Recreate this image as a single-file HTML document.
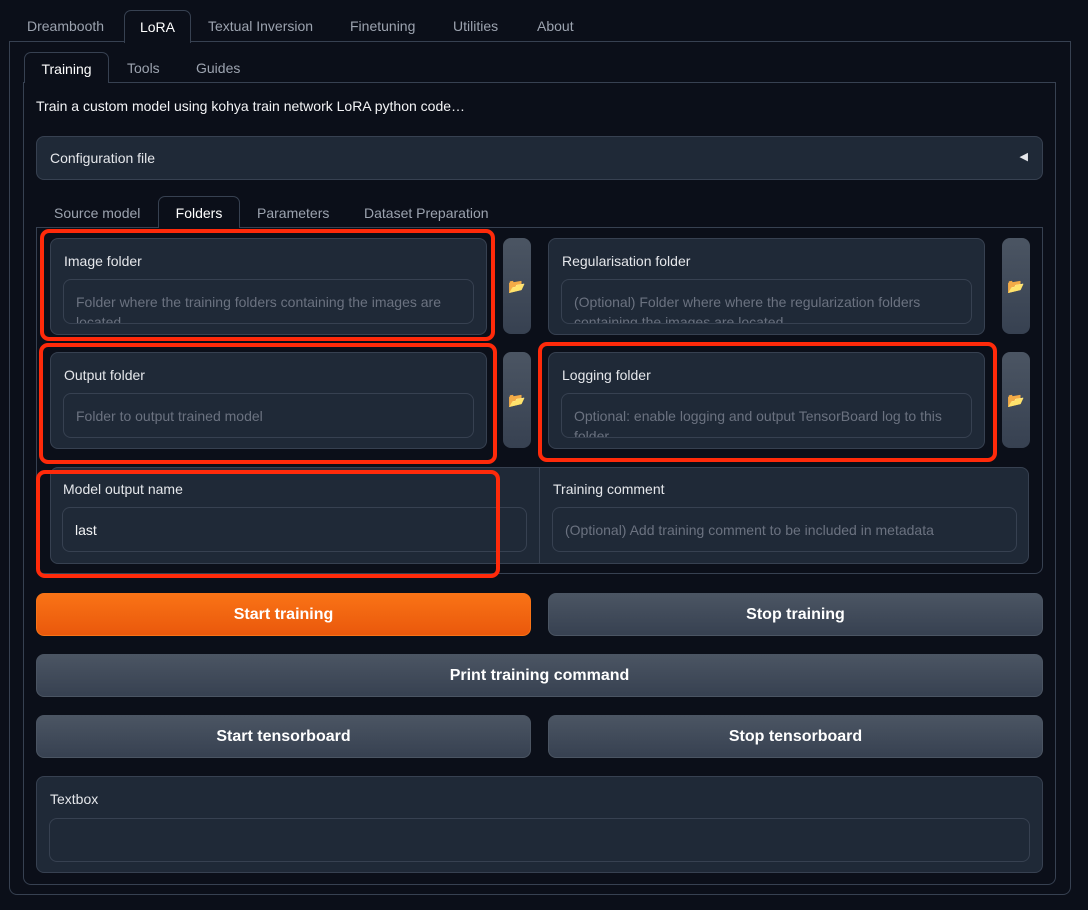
<!DOCTYPE html>
<html><head><style>
*{box-sizing:border-box;margin:0;padding:0}
body{width:1088px;height:910px;background:#0b0f19;font-family:"Liberation Sans",sans-serif;color:#e5e7eb;position:relative;overflow:hidden;font-size:14px}
.a{position:absolute}
.tab{position:absolute;font-size:14px;color:#9ca3af}
.sel{border:1px solid #374151;border-bottom:none;background:#0b0f19;border-radius:7px 7px 0 0;color:#fff}
.box{position:absolute;background:#1f2937;border:1px solid #374151;border-radius:8px}
.lbl{position:absolute;left:13px;top:14px;font-size:14px;color:#e5e7eb}
.inp{position:absolute;left:12px;right:12px;top:40px;height:45px;border:1px solid #374151;border-radius:8px;background:#1f2937;color:#6b7280;font-size:14px;padding:12px 12px 0;line-height:20px;overflow:hidden}
.fb{position:absolute;width:28px;height:96px;border-radius:8px;background:linear-gradient(#4b5563,#374151);display:flex;align-items:center;justify-content:center}
.red{position:absolute;border:4px solid #ff2a0a;border-radius:9px}
.btn{position:absolute;height:43px;border-radius:8px;background:linear-gradient(#4b5563,#374151);color:#fff;font-weight:bold;font-size:16px;display:flex;align-items:center;justify-content:center;border:1px solid #4b5563}
</style></head><body>
<div class="a" style="left:9px;top:41px;width:1062px;height:854px;border:1px solid #374151;border-radius:0 0 8px 8px"></div>
<div class="tab" style="left:27px;top:18px">Dreambooth</div>
<div class="tab sel" style="left:124px;top:10px;width:67px;height:33px;text-align:center;padding-top:8px">LoRA</div>
<div class="tab" style="left:208px;top:18px">Textual Inversion</div>
<div class="tab" style="left:350px;top:18px">Finetuning</div>
<div class="tab" style="left:453px;top:18px">Utilities</div>
<div class="tab" style="left:537px;top:18px">About</div>

<div class="a" style="left:23px;top:82px;width:1033px;height:803px;border:1px solid #374151;border-radius:0 0 8px 8px"></div>
<div class="tab sel" style="left:24px;top:52px;width:85px;height:31px;text-align:center;padding-top:8px">Training</div>
<div class="tab" style="left:127px;top:60px">Tools</div>
<div class="tab" style="left:196px;top:60px">Guides</div>
<div class="a" style="left:36px;top:98px;font-size:14px;color:#f3f4f6">Train a custom model using kohya train network LoRA python code…</div>

<div class="box" style="left:36px;top:136px;width:1007px;height:44px"><div class="a" style="left:13px;top:13px">Configuration file</div><div class="a" style="right:14px;top:13px;font-size:11px">◀</div></div>

<div class="a" style="left:36px;top:227px;width:1007px;height:347px;border:1px solid #374151;border-radius:0 0 8px 8px"></div>
<div class="tab" style="left:54px;top:205px">Source model</div>
<div class="tab sel" style="left:158px;top:196px;width:82px;height:32px;text-align:center;padding-top:8px">Folders</div>
<div class="tab" style="left:257px;top:205px">Parameters</div>
<div class="tab" style="left:364px;top:205px">Dataset Preparation</div>

<div class="box" style="left:50px;top:238px;width:437px;height:97px"><div class="lbl">Image folder</div><div class="inp">Folder where the training folders containing the images are located</div></div>
<div class="fb" style="left:503px;top:238px">📂</div>
<div class="box" style="left:548px;top:238px;width:437px;height:97px"><div class="lbl">Regularisation folder</div><div class="inp">(Optional) Folder where where the regularization folders containing the images are located</div></div>
<div class="fb" style="left:1002px;top:238px">📂</div>

<div class="box" style="left:50px;top:352px;width:437px;height:97px"><div class="lbl">Output folder</div><div class="inp">Folder to output trained model</div></div>
<div class="fb" style="left:503px;top:352px">📂</div>
<div class="box" style="left:548px;top:352px;width:437px;height:97px"><div class="lbl">Logging folder</div><div class="inp">Optional: enable logging and output TensorBoard log to this folder</div></div>
<div class="fb" style="left:1002px;top:352px">📂</div>

<div class="box" style="left:50px;top:467px;width:979px;height:97px"></div>
<div class="a" style="left:539px;top:467px;width:1px;height:97px;background:#374151"></div>
<div class="a" style="left:50px;top:467px;width:489px;height:97px"><div class="lbl">Model output name</div><div class="inp" style="color:#f3f4f6">last</div></div>
<div class="a" style="left:540px;top:467px;width:489px;height:97px"><div class="lbl">Training comment</div><div class="inp">(Optional) Add training comment to be included in metadata</div></div>

<div class="red" style="left:40px;top:229px;width:455px;height:112px"></div>
<div class="red" style="left:39px;top:343px;width:458px;height:121px"></div>
<div class="red" style="left:538px;top:342px;width:459px;height:120px"></div>
<div class="red" style="left:36px;top:470px;width:464px;height:108px"></div>

<div class="btn" style="left:36px;top:593px;width:495px;background:linear-gradient(#f97316,#ea580c);border-color:#f97316">Start training</div>
<div class="btn" style="left:548px;top:593px;width:495px">Stop training</div>
<div class="btn" style="left:36px;top:654px;width:1007px">Print training command</div>
<div class="btn" style="left:36px;top:715px;width:495px">Start tensorboard</div>
<div class="btn" style="left:548px;top:715px;width:495px">Stop tensorboard</div>

<div class="box" style="left:36px;top:776px;width:1007px;height:97px"><div class="lbl">Textbox</div><div class="inp" style="top:41px;height:44px"></div></div>
</body></html>
